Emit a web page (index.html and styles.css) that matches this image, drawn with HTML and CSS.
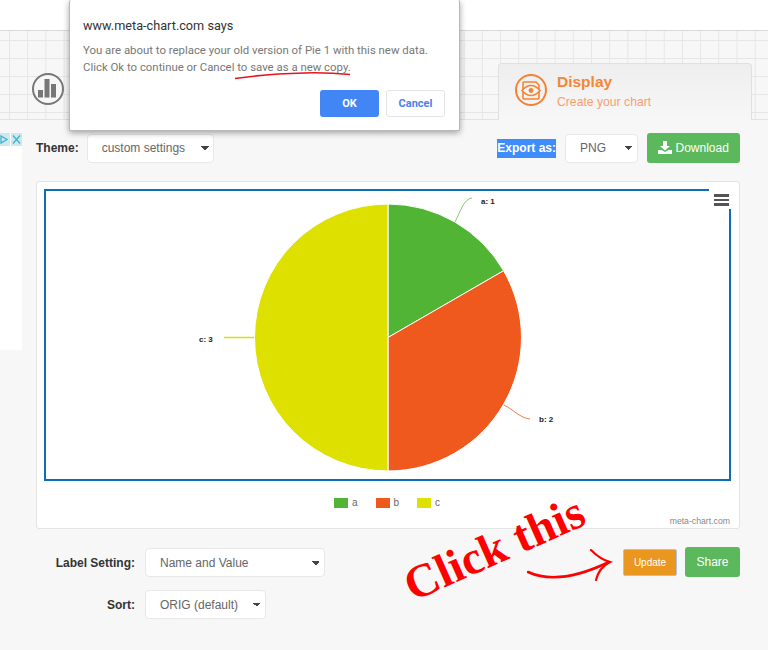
FILE: index.html
```html
<!DOCTYPE html>
<html lang="en">
<head>
  <meta charset="UTF-8" />
  <title>Meta Chart - Display</title>
  <link rel="stylesheet" href="styles.css">
</head>
<body>
<div class="topbar"></div>

<header class="steps">
  <div class="step-icon">
    <svg width="34" height="34" viewBox="0 0 34 34">
      <circle cx="17" cy="17" r="15" fill="#f7f7f7" stroke="#777" stroke-width="2"/>
      <rect x="7" y="18" width="5" height="7.500" fill="#777"/>
      <rect x="13.500" y="7" width="5" height="18.500" fill="#777"/>
      <rect x="20" y="12" width="5" height="13.500" fill="#777"/>
    </svg>
  </div>
  <div class="tab-display">
    <svg width="34" height="34" viewBox="0 0 34 34">
      <circle cx="17" cy="17" r="15" fill="none" stroke="#f58233" stroke-width="2"/>
      <path d="M10 9h12l3 3v13a1 1 0 0 1-1 1H10a1 1 0 0 1-1-1V10a1 1 0 0 1 1-1z" fill="none" stroke="#f58233" stroke-width="1.600"/>
      <path d="M8 17.500c3-3.600 6-5 9-5s6 1.400 9 5c-3 3.600-6 5-9 5s-6-1.400-9-5z" fill="#f6f6f6" stroke="#f58233" stroke-width="1.600"/>
      <circle cx="17" cy="17.500" r="2.400" fill="#f58233"/>
    </svg>
    <div>
      <div class="tab-title">Display</div>
      <div class="tab-sub">Create your chart</div>
    </div>
  </div>
</header>

<main class="content">
  <div class="toolbar">
    <div class="field">
      <label class="lbl">Theme:</label>
      <select class="sel sel-theme"><option>custom settings</option></select>
    </div>
    <div class="field">
      <span class="lbl selected">Export as:</span>
      <select class="sel sel-export"><option>PNG</option></select>
      <button class="btn btn-green btn-download">
        <svg width="14" height="13" viewBox="0 0 14 13">
          <path d="M5 0h4v5h3L7 9.500 2 5h3z" fill="#fff"/>
          <path d="M0 9h3.500L7 11l3.500-2H14v4H0z" fill="#fff"/>
        </svg>
        Download
      </button>
    </div>
  </div>

  <section class="card">
    <div class="chart">
      <svg class="pie" width="683" height="288" viewBox="46 191 683 288">
        <path d="M388 337.500V204A133.500 133.500 0 0 1 503.600 270.750Z" fill="#52b434" stroke="#fff"/>
        <path d="M388 337.500L503.600 270.750A133.500 133.500 0 0 1 388 471Z" fill="#f0591e" stroke="#fff"/>
        <path d="M388 337.500V471A133.500 133.500 0 0 1 388 204Z" fill="#dee000" stroke="#fff"/>
        <path d="M455 222C461 210 464 199 472 198" fill="none" stroke="#52b434" stroke-opacity=".7"/>
        <path d="M504 405C514 410 520 418 530 419" fill="none" stroke="#f0591e" stroke-opacity=".8"/>
        <path d="M224 337.500H254" fill="none" stroke="#dee000" stroke-width="1.500"/>
        <text class="pie-label" x="481" y="204">a: 1</text>
        <text class="pie-label" x="539" y="422">b: 2</text>
        <text class="pie-label" x="199" y="342">c: 3</text>
      </svg>
      <button class="menu-btn"><span></span><span></span><span></span></button>
    </div>
    <div class="legend">
      <span class="key"><i class="sw sw-a"></i>a</span>
      <span class="key"><i class="sw sw-b"></i>b</span>
      <span class="key"><i class="sw sw-c"></i>c</span>
    </div>
    <div class="credit">meta-chart.com</div>
  </section>

  <div class="bottom">
    <div class="options">
      <label class="lbl">Label Setting:</label>
      <select class="sel sel-label"><option>Name and Value</option></select>
      <label class="lbl">Sort:</label>
      <select class="sel sel-sort"><option>ORIG (default)</option></select>
    </div>
    <div class="actions">
      <button class="btn btn-update">Update</button>
      <button class="btn btn-green btn-share">Share</button>
    </div>
  </div>
</main>

<!-- ad stub on the left edge -->
<aside class="ad">
  <svg width="22" height="13" viewBox="0 0 22 13">
    <rect width="10" height="13" fill="#cfe8ee"/>
    <rect x="11" width="11" height="13" fill="#cfe8ee"/>
    <path d="M1 3l6 3.500L1 10z" fill="none" stroke="#3bb4d4" stroke-width="1.300"/>
    <path d="M13 2.500l7 8M20 2.500l-7 8" stroke="#3bb4d4" stroke-width="1.300"/>
  </svg>
</aside>

<!-- browser confirm box -->
<div class="dialog">
  <div class="dialog-title">www.meta-chart.com says</div>
  <p class="dialog-text">You are about to replace your old version of Pie 1 with this new data.<br>Click Ok to continue or Cancel to save as a new copy.</p>
  <div class="dialog-btns">
    <button class="dbtn dbtn-ok">OK</button>
    <button class="dbtn dbtn-cancel">Cancel</button>
  </div>
  <svg class="scribble" width="122" height="10" viewBox="0 0 122 10">
    <path d="M1 8.500C25 5 50 3.500 70 3S100 3 116 4.500" fill="none" stroke="#e8121e" stroke-width="1.500"/>
  </svg>
</div>

<!-- hand drawn note -->
<div class="note">Click this</div>
<svg class="note-arrow" width="90" height="36" viewBox="0 0 90 36">
  <path d="M1 23C25 34 55 26 82 13" fill="none" stroke="#f00" stroke-width="2.600" stroke-linecap="round"/>
  <path d="M64 1C69 6 75 11 83 13C75 17 71 23 69 31" fill="none" stroke="#f00" stroke-width="2.200" stroke-linecap="round"/>
</svg>
</body>
</html>
```

FILE: styles.css
```css
html, body {
  margin: 0;
  height: 650px;
  overflow: hidden;
}
body {
  position: relative;
  background: #f7f7f7;
  font-family: 'Liberation Sans', Arial, sans-serif;
  font-size: 12px;
  color: #333;
}
.topbar {
  height: 30px;
  background: #fff;
  border-bottom: 1px solid #d8d8d8;
}
.steps {
  height: 88px;
  display: flex;
  justify-content: space-between;
  align-items: flex-end;
  padding: 0 16px 0 31px;
  background-color: #f7f7f7;
  background-image:
    linear-gradient(#e6e6e6 1px, transparent 1px),
    linear-gradient(90deg, #e6e6e6 1px, transparent 1px);
  background-size: 18.200px 18px;
  background-position: 9px 9px;
  border-bottom: 1px solid #e2e2e2;
}
.step-icon {
  align-self: flex-start;
  margin-top: 41px;
  height: 34px;
}
.tab-display {
  width: 254px;
  height: 57px;
  margin-bottom: -1px;
  display: flex;
  gap: 9px;
  padding: 0 0 0 15px;
  box-sizing: border-box;
  align-items: flex-start;
  background: linear-gradient(#eeeeee, #f7f7f7);
  border: 1px solid #e0e0e0;
  border-bottom: none;
  border-radius: 4px 4px 0 0;
}
.tab-display svg {
  margin-top: 9px;
}
.tab-title {
  margin-top: 9px;
  font-size: 15.500px;
  font-weight: bold;
  line-height: 18px;
  color: #f68536;
}
.tab-sub {
  margin-top: 4px;
  font-size: 12.200px;
  line-height: 14px;
  color: #f9a06e;
}
.content {
  padding: 12px 28px 0 36px;
}
.toolbar {
  display: flex;
  justify-content: space-between;
  align-items: center;
  height: 32px;
}
.field {
  display: flex;
  align-items: center;
}
.lbl {
  font-weight: bold;
  font-size: 12px;
  color: #333;
}
.selected {
  background: #3f8cff;
  color: #fff;
  padding: 2px 0 3px;
  margin-right: 9px;
}
.sel {
  appearance: none;
  height: 29px;
  border: 1px solid #e8e8e8;
  border-radius: 4px;
  font-family: inherit;
  font-size: 12px;
  color: #666;
  padding-left: 14px;
  outline: none;
  background-color: #fff;
  background-image:
    linear-gradient(45deg, transparent 50%, #444 50%),
    linear-gradient(-45deg, transparent 50%, #444 50%);
  background-size: 4px 4px;
  background-repeat: no-repeat;
  background-position: right 8px center, right 4px center;
}
.sel-theme {
  width: 127px;
  margin-left: 8px;
}
.sel-export {
  width: 73px;
  margin-right: 9px;
}
.sel-label {
  width: 180px;
}
.sel-sort {
  width: 121px;
}
.btn {
  border: none;
  border-radius: 3px;
  color: #fff;
  font-family: inherit;
  font-size: 12px;
  cursor: pointer;
}
.btn-green {
  background: #5cb85c;
}
.btn-download {
  width: 93px;
  height: 30px;
  padding: 0;
}
.btn-download svg {
  vertical-align: -2px;
}
.card {
  margin-top: 17px;
  height: 348px;
  box-sizing: border-box;
  padding: 7px;
  background: #fff;
  border: 1px solid #e4e4e4;
  border-radius: 3px;
}
.chart {
  position: relative;
  width: 683px;
  height: 288px;
  border: 2px solid #0a6ebd;
}
.pie {
  display: block;
}
.pie-label {
  font-size: 8px;
  font-weight: bold;
  fill: #222;
}
.menu-btn {
  position: absolute;
  top: -2px;
  right: -2px;
  width: 22px;
  height: 20px;
  padding: 5px 2px 0 5px;
  background: #fff;
  border: none;
  display: flex;
  flex-direction: column;
  gap: 2px;
  box-sizing: border-box;
}
.menu-btn span {
  display: block;
  width: 15px;
  height: 2.500px;
  background: #555;
}
.legend {
  display: flex;
  justify-content: center;
  gap: 18px;
  margin: 16px 2px 0 0;
  font-size: 10px;
  line-height: 11px;
  color: #666;
}
.key {
  display: flex;
  align-items: center;
  gap: 4px;
}
.sw {
  display: block;
  width: 14px;
  height: 10px;
}
.sw-a { background: #52b434; }
.sw-b { background: #f0591e; }
.sw-c { background: #dee000; }
.credit {
  margin-top: 8px;
  padding-right: 2px;
  text-align: right;
  font-size: 8.700px;
  line-height: 10px;
  color: #888;
}
.bottom {
  display: flex;
  justify-content: space-between;
  align-items: flex-start;
  margin-top: 19px;
}
.options {
  display: grid;
  grid-template-columns: 99px auto;
  justify-items: start;
  align-items: center;
  column-gap: 10px;
  row-gap: 13px;
}
.options .lbl {
  justify-self: end;
}
.actions {
  display: flex;
  align-items: center;
  gap: 8px;
  margin-top: -1px;
}
.btn-update {
  width: 54px;
  height: 27px;
  padding: 0;
  background: #ea971f;
  border: 1px solid #a9c4e6;
  font-size: 10px;
  border-radius: 2px;
}
.btn-share {
  width: 55px;
  height: 30px;
  padding: 0;
  font-size: 12px;
}
.ad {
  position: absolute;
  left: 0;
  top: 133px;
  width: 22px;
  height: 217px;
  background: #fff;
}
.ad svg {
  display: block;
}
.dialog {
  position: absolute;
  left: 69px;
  top: 0;
  width: 391px;
  height: 131px;
  box-sizing: border-box;
  padding: 17px 14px 0 13px;
  background: #fff;
  border: 1px solid #b8b8b8;
  border-top: none;
  border-radius: 2px;
  box-shadow: 0 2px 6px rgba(0, 0, 0, .35);
  font-family: Roboto, sans-serif;
}
.dialog-title {
  font-size: 12.700px;
  line-height: 17px;
  color: #333;
}
.dialog-text {
  margin: 8px 0 0;
  font-size: 11.400px;
  line-height: 17px;
  color: #777;
  white-space: nowrap;
}
.dialog-btns {
  display: flex;
  justify-content: flex-end;
  gap: 7px;
  margin-top: 14px;
}
.dbtn {
  width: 59px;
  height: 27px;
  padding: 0;
  border-radius: 3px;
  font-family: inherit;
  font-size: 11px;
  font-weight: bold;
}
.dbtn-ok {
  background: #4285f4;
  border: none;
  color: #fff;
}
.dbtn-cancel {
  background: #fff;
  border: 1px solid #e4e4e4;
  color: #4a80ea;
}
.scribble {
  position: absolute;
  left: 164px;
  top: 70px;
}
.note {
  position: absolute;
  left: 398px;
  top: 520px;
  font-family: 'Liberation Serif', serif;
  font-size: 47px;
  line-height: 56px;
  font-weight: bold;
  color: #f00;
  white-space: nowrap;
  transform: rotate(-24deg);
}
.note-arrow {
  position: absolute;
  left: 527px;
  top: 549px;
}
```
